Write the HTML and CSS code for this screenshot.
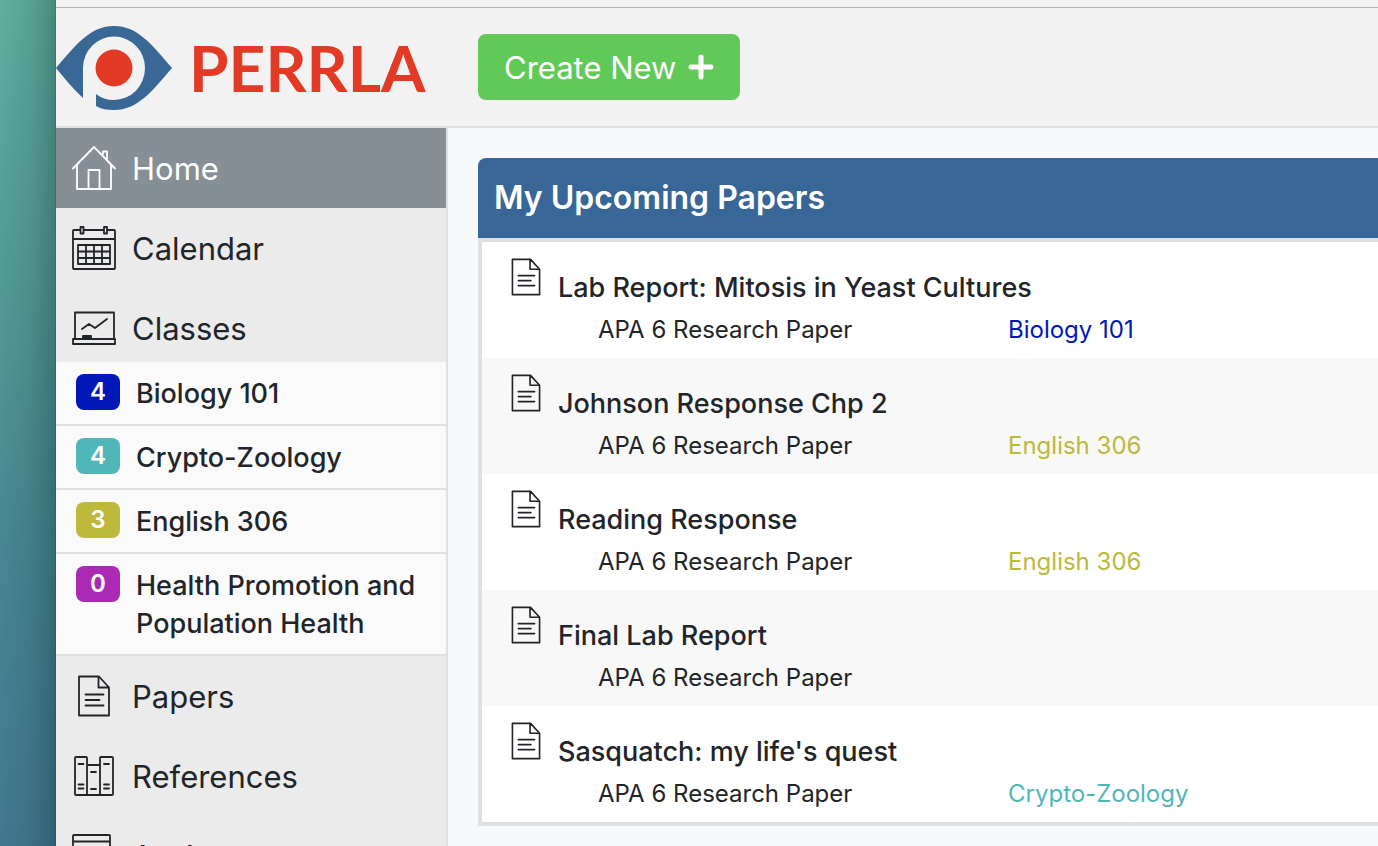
FILE: index.html
```html
<!DOCTYPE html>
<html lang="en">
<head>
    <meta charset="UTF-8">
    <meta name="viewport" content="width=device-width, initial-scale=1.0">
    <title>PERRLA</title>
    <link rel="stylesheet" href="styles.css">
</head>
<body>

    <!-- Shared icons -->
    <svg class="icon-defs" aria-hidden="true">
        <symbol id="icon-paper" viewBox="0 0 34 42">
            <path d="M2 1.5h20l10 11v28H2zM21.500 1.500v11H32M8.500 19.500h18M8.500 25h14M8.500 30.500h18"/>
        </symbol>
    </svg>

    <div class="app">
        <div class="toolbar-edge"></div>

        <header class="header">
            <a href="#" class="logo" aria-label="PERRLA">
                <svg class="logo-eye" viewBox="0 0 116 86">
                    <path fill="#396796" d="M0 43C20 20 34 1 58 1s38 19 58 42C96 66 82 85 58 85c-7 0-13-1-18-4V69c5 4 11 6 18 6a31 32 0 0 0 31-32 31 31.500 0 0 0-62 0v30C17 64 9 54 0 43z"/>
                    <circle fill="#e23a24" cx="58" cy="43" r="18.500"/>
                </svg>
                <span class="logo-text">PERRLA</span>
            </a>
            <button type="button" class="create-button">
                Create New
                <svg class="plus" viewBox="0 0 26 26"><path d="M13 3v20M3 13h20"/></svg>
            </button>
        </header>

        <div class="columns">
            <nav class="sidebar">
                <a href="#" class="nav-item active">
                    <svg class="nav-icon" viewBox="0 0 44 44"><path d="M1 22.500 22 1l21 21.500M5 19v24h34V19M16.500 43V24h11v19M31 8V5.500h4V13"/></svg>
                    Home
                </a>
                <a href="#" class="nav-item">
                    <svg class="nav-icon" viewBox="0 0 44 44"><path d="M8 4H2Q1 4 1 5v37q0 1 1 1h40q1 0 1-1V5q0-1-1-1h-6M12 4h20M1 13h42M8.500 1h3v6.500h-3zM32 1h3v6.500h-3zM6 19h32v19H6zM6 25.500h32M6 32h32M14 19v19M22 19v19M30 19v19"/></svg>
                    Calendar
                </a>
                <a href="#" class="nav-item classes">
                    <svg class="nav-icon" viewBox="0 0 44 44"><path d="M3 33V6.500h39V33M1 33h42v5H1zM10 23l7-5 6 4 12-9"/><path fill="currentColor" d="M11 30h8v3h-8z"/></svg>
                    Classes
                </a>

                <ul class="class-list">
                    <li><a href="#"><span class="badge biology">4</span><span class="class-name">Biology 101</span></a></li>
                    <li><a href="#"><span class="badge crypto">4</span><span class="class-name">Crypto-Zoology</span></a></li>
                    <li><a href="#"><span class="badge english">3</span><span class="class-name">English 306</span></a></li>
                    <li><a href="#"><span class="badge health">0</span><span class="class-name">Health Promotion and Population Health</span></a></li>
                </ul>

                <a href="#" class="nav-item">
                    <svg class="nav-icon paper"><use href="#icon-paper"/></svg>
                    Papers
                </a>
                <a href="#" class="nav-item">
                    <svg class="nav-icon" viewBox="0 0 44 44"><path d="M4 3h10q1 0 1 1v36q0 1-1 1H4q-1 0-1-1V4q0-1 1-1zM29 3h11q1 0 1 1v36q0 1-1 1H29q-1 0-1-1V4q0-1 1-1zM15 11h13M15 41h13M6.500 10h5M32 10h5M19 18h5M19 35h5M6.500 30.500h5M6.500 34.500h5M32 30.500h5M32 34.500h5"/></svg>
                    References
                </a>
                <a href="#" class="nav-item">
                    <svg class="nav-icon" viewBox="0 0 44 44"><path d="M1 43V2q0-1 1-1h35q1 0 1 1v41M1 7.500h37"/></svg>
                    Assignments
                </a>
            </nav>

            <main class="content">
                <section class="card">
                    <h1>My Upcoming Papers</h1>
                    <ul class="paper-list">
                        <li>
                            <svg class="paper-icon"><use href="#icon-paper"/></svg>
                            <a href="#" class="paper-title">Lab Report: Mitosis in Yeast Cultures</a>
                            <span class="paper-type">APA 6 Research Paper</span>
                            <a href="#" class="paper-class biology-text">Biology 101</a>
                        </li>
                        <li>
                            <svg class="paper-icon"><use href="#icon-paper"/></svg>
                            <a href="#" class="paper-title">Johnson Response Chp 2</a>
                            <span class="paper-type">APA 6 Research Paper</span>
                            <a href="#" class="paper-class english-text">English 306</a>
                        </li>
                        <li>
                            <svg class="paper-icon"><use href="#icon-paper"/></svg>
                            <a href="#" class="paper-title">Reading Response</a>
                            <span class="paper-type">APA 6 Research Paper</span>
                            <a href="#" class="paper-class english-text">English 306</a>
                        </li>
                        <li>
                            <svg class="paper-icon"><use href="#icon-paper"/></svg>
                            <a href="#" class="paper-title">Final Lab Report</a>
                            <span class="paper-type">APA 6 Research Paper</span>
                        </li>
                        <li>
                            <svg class="paper-icon"><use href="#icon-paper"/></svg>
                            <a href="#" class="paper-title">Sasquatch: my life's quest</a>
                            <span class="paper-type">APA 6 Research Paper</span>
                            <a href="#" class="paper-class crypto-text">Crypto-Zoology</a>
                        </li>
                    </ul>
                </section>
            </main>
        </div>
    </div>

</body>
</html>
```
FILE: styles.css
```css
* {
    margin: 0;
    padding: 0;
    box-sizing: border-box;
}

body {
    font-family: Inter, "Liberation Sans", sans-serif;
    color: #212529;
    height: 100vh;
    padding-left: 56px;
    overflow: hidden;
    background: linear-gradient(to right, rgba(0, 20, 20, 0) 0, rgba(0, 20, 20, 0.08) 30px, rgba(0, 20, 20, 0.24) 55px, rgba(0, 20, 20, 0.45) 56px),
        linear-gradient(#5fae9f 0%, #549c97 30%, #468792 65%, #42788f 100%);
}

a {
    color: inherit;
    text-decoration: none;
}

ul {
    list-style: none;
}

svg {
    fill: none;
    stroke: currentColor;
    stroke-width: 1.8;
    stroke-linejoin: round;
    stroke-linecap: round;
    flex-shrink: 0;
}

.icon-defs {
    display: none;
}

.app {
    background: #f8f9fb;
}

.toolbar-edge {
    height: 8px;
    background: #f2f2f2;
    border-bottom: 1px solid #b2b2b2;
}

/* Header */
.header {
    display: flex;
    align-items: center;
    height: 120px;
    background: #f2f2f2;
    border-bottom: 2px solid #dee0e2;
}

.logo {
    display: flex;
    align-items: center;
    gap: 17px;
    width: 422px;
    padding-top: 2px;
}

.logo-eye {
    width: 116px;
    height: 86px;
    stroke: none;
}

.logo-text {
    font-family: Lato, Inter, sans-serif;
    font-size: 64px;
    line-height: 80px;
    font-weight: 700;
    color: #e23a24;
}

.create-button {
    display: flex;
    align-items: center;
    gap: 12px;
    height: 66px;
    padding: 0 26px;
    font-family: inherit;
    font-size: 31px;
    color: #fff;
    background: #61c958;
    border: none;
    border-radius: 8px;
    cursor: pointer;
}

.plus {
    width: 26px;
    height: 26px;
    stroke-width: 5;
}

.columns {
    display: flex;
}

/* Sidebar */
.sidebar {
    width: 392px;
    flex-shrink: 0;
    background: #ebebeb;
    border-right: 2px solid #dee0e2;
}

.nav-item {
    display: flex;
    align-items: center;
    gap: 16px;
    height: 80px;
    padding: 0 16px;
    font-size: 31px;
}

.nav-item.active {
    color: #fff;
    background: #868e96;
}

.nav-item.classes {
    height: 74px;
    padding-top: 6px;
}

.nav-icon {
    width: 44px;
    height: 44px;
}

.nav-icon.paper {
    padding: 1px 0;
}

.class-list a {
    display: flex;
    align-items: flex-start;
    gap: 16px;
    padding: 12px 20px 11px;
    font-size: 27px;
    line-height: 38px;
    font-weight: 500;
    background: #fafafa;
    border-bottom: 2px solid #dee0e2;
}

.class-name {
    padding-top: 1px;
}

.badge {
    width: 44px;
    height: 36px;
    flex-shrink: 0;
    font-size: 24px;
    line-height: 36px;
    font-weight: 600;
    text-align: center;
    color: #fff;
    border-radius: 8px;
}

.biology {
    background: #0018b8;
}

.crypto {
    background: #50b7b9;
}

.english {
    background: #bdb93a;
}

.health {
    background: #ab2ab5;
}

/* Upcoming papers */
.content {
    flex: 1;
    padding: 30px 0 30px 30px;
}

.card h1 {
    padding: 0 16px;
    font-size: 32px;
    line-height: 80px;
    font-weight: 600;
    color: #fff;
    background: #386696;
    border-top-left-radius: 8px;
}

.paper-list {
    background: #fff;
    border: 4px solid #dee0e2;
    border-right: none;
}

.paper-list li {
    display: grid;
    grid-template-columns: 48px 40px 410px 1fr;
    grid-template-rows: 44px 40px;
    padding: 16px 0 16px 28px;
}

.paper-list li:nth-child(even) {
    background: #f8f8f8;
}

.paper-icon {
    width: 32px;
    height: 38px;
}

.paper-title {
    grid-column: 2 / 5;
    font-size: 27px;
    line-height: 60px;
    font-weight: 500;
}

.paper-type {
    grid-column: 3;
    font-size: 24px;
    line-height: 56px;
}

.paper-class {
    font-size: 24px;
    line-height: 56px;
}

.biology-text {
    color: #0018b8;
}

.crypto-text {
    color: #50b7b9;
}

.english-text {
    color: #bdb93a;
}
```
